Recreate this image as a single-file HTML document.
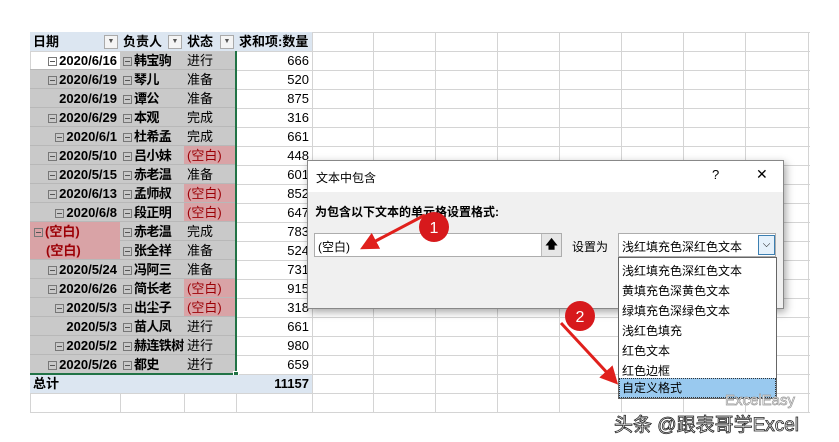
<!DOCTYPE html>
<html><head><meta charset="utf-8"><style>
*{margin:0;padding:0;box-sizing:border-box}
body{width:839px;height:442px;background:#fff;position:relative;overflow:hidden;font-family:"Liberation Sans","Microsoft YaHei","Noto Sans CJK SC",sans-serif;font-size:13px;color:#000}
.a{position:absolute}
.vl{position:absolute;width:1px;background:#d4d4d4}
.hl{position:absolute;height:1px;background:#d4d4d4}
.c{position:absolute;height:19px;line-height:19px;white-space:nowrap;overflow:hidden;border-right:1px solid #b8b8b8;border-bottom:1px solid #b8b8b8}
.g{background:#c9c9c9}
.p{background:#d9a3a6;color:#9c0006}
.b{font-weight:bold}
.m{display:inline-block;width:9px;height:9px;border:1px solid #777;margin-right:2px;vertical-align:-1px;position:relative}
.m:after{content:"";position:absolute;left:1px;top:3px;width:5px;height:1px;background:#555}
.dd{display:inline-block;width:14px;height:14px;border:1px solid #aaa;background:#f4f4f4;position:absolute;top:2px;font-size:7px;line-height:12px;text-align:center;color:#555}
.dlg{font-size:12px}
</style></head><body>
<div id="grid"></div>
<script>
var h='';
for(var y=32;y<=412;y+=19)h+='<div class="hl" style="left:30px;top:'+y+'px;width:780px"></div>';
[30,120,184,236,312,373,435,497,559,621,683,745,808].forEach(function(x){h+='<div class="vl" style="left:'+x+'px;top:32px;height:381px"></div>'});
document.getElementById('grid').innerHTML=h;
</script>
<div class="a" style="left:30px;top:32px;width:282px;height:19px;background:#dce6f1"></div>
<div class="a b" style="left:33px;top:32px;line-height:19px">日期</div>
<div class="dd" style="left:104px;top:35px">▼</div>
<div class="a b" style="left:123px;top:32px;line-height:19px">负责人</div>
<div class="dd" style="left:168px;top:35px">▼</div>
<div class="a b" style="left:187px;top:32px;line-height:19px">状态</div>
<div class="dd" style="left:220px;top:35px">▼</div>
<div class="a b" style="left:239px;top:32px;line-height:19px">求和项:数量</div>
<div id="rows"></div>
<script>
var d=[[1,'2020/6/16','韩宝驹','进行',666],[1,'2020/6/19','琴儿','准备',520],[0,'2020/6/19','谭公','准备',875],[1,'2020/6/29','本观','完成',316],[1,'2020/6/1','杜希孟','完成',661],[1,'2020/5/10','吕小妹','(空白)',448],[1,'2020/5/15','赤老温','准备',601],[1,'2020/6/13','孟师叔','(空白)',852],[1,'2020/6/8','段正明','(空白)',647],[2,'(空白)','赤老温','完成',783],[3,'(空白)','张全祥','准备',524],[1,'2020/5/24','冯阿三','准备',731],[1,'2020/6/26','简长老','(空白)',915],[1,'2020/5/3','出尘子','(空白)',318],[0,'2020/5/3','苗人凤','进行',661],[1,'2020/5/2','赫连铁树','进行',980],[1,'2020/5/26','都史','进行',659]];
var h='';
d.forEach(function(r,i){var y=51+i*19;
var pa=r[0]>=2;
var acls=pa?'p':(i==0?'':'g');
var at=(r[0]==1||r[0]==2?'<span class="m"></span>':'')+r[1];
if(pa){h+='<div class="c p b" style="left:30px;top:'+y+'px;width:91px;padding-left:'+(r[0]==2?4:16)+'px;'+(r[0]==2?'border-bottom:none':'')+'">'+at+'</div>';}
else h+='<div class="c '+acls+' b" style="left:30px;top:'+y+'px;width:91px;text-align:right;padding-right:3px">'+at+'</div>';
h+='<div class="c g b" style="left:120px;top:'+y+'px;width:65px;padding-left:3px;letter-spacing:-0.6px"><span class="m"></span>'+r[2]+'</div>';
var p=r[3]=='(空白)';
h+='<div class="c '+(p?'p':'g')+'" style="left:184px;top:'+y+'px;width:52px;padding-left:3px">'+r[3]+'</div>';
h+='<div class="a" style="left:236px;top:'+y+'px;width:73px;line-height:19px;text-align:right">'+r[4]+'</div>';
});
document.getElementById('rows').innerHTML=h;
</script>
<div class="a" style="left:235px;top:51px;width:2px;height:324px;background:#217346"></div>
<div class="a" style="left:30px;top:373px;width:207px;height:2px;background:#217346"></div>
<div class="a" style="left:233px;top:371px;width:6px;height:6px;background:#217346;border:1px solid #fff"></div>
<div class="a b" style="left:30px;top:375px;width:282px;height:18px;background:#dce6f1;line-height:18px;padding-left:3px">总计<span style="position:absolute;right:3px">11157</span></div>
<div class="a dlg" style="left:307px;top:160px;width:477px;height:149px;background:#f0f0f0;border:1px solid #888;box-shadow:2px 3px 8px rgba(0,0,0,.35)">
 <div class="a" style="left:0;top:0;width:475px;height:31px;background:#fff"></div>
 <div class="a" style="left:8px;top:8px">文本中包含</div>
 <div class="a" style="left:404px;top:6px;font-size:13px">?</div>
 <div class="a" style="left:448px;top:5px;font-size:14px">✕</div>
 <div class="a b" style="left:7px;top:42px">为包含以下文本的单元格设置格式:</div>
 <div class="a" style="left:6px;top:72px;width:248px;height:24px;background:#fff;border:1px solid #adadad;padding:4px 3px">(空白)</div>
 <div class="a" style="left:233px;top:73px;width:20px;height:22px;background:#e6e6e6;border-left:1px solid #bbb;text-align:center;font-weight:bold;line-height:20px">🡅</div>
 <div class="a" style="left:264px;top:77px">设置为</div>
 <div class="a" style="left:310px;top:72px;width:158px;height:24px;background:#fff;border:1px solid #adadad;padding:4px 3px">浅红填充色深红色文本</div>
 <div class="a" style="left:450px;top:74px;width:17px;height:20px;border:1px solid #3c7fb1;background:#e5f1fb;text-align:center;font-size:10px;line-height:18px">⌵</div>
</div>
<div class="a dlg" style="left:618px;top:257px;width:159px;height:142px;background:#fff;border:1px solid #666">
 <div style="padding:3px 0 0 3px;line-height:20px">浅红填充色深红色文本<br>黄填充色深黄色文本<br>绿填充色深绿色文本<br>浅红色填充<br>红色文本<br>红色边框</div>
 <div class="a" style="left:0;top:120px;width:157px;height:20px;background:#99c9ef;border:1px dotted #333;line-height:18px;padding-left:2px">自定义格式</div>
</div>
<svg class="a" style="left:0;top:0" width="839" height="442">
 <defs><marker id="ah" markerWidth="6" markerHeight="6" refX="3" refY="3" orient="auto"><path d="M0,0L6,3L0,6Z" fill="#e0201c"/></marker></defs>
 <line x1="425" y1="215" x2="368" y2="245" stroke="#e0201c" stroke-width="3" marker-end="url(#ah)"/>
 <line x1="561" y1="323" x2="612" y2="378" stroke="#e0201c" stroke-width="3" marker-end="url(#ah)"/>
 <circle cx="434" cy="227" r="15" fill="#d7191c"/><text x="434" y="233" font-size="16" fill="#fff" text-anchor="middle" font-family="Liberation Sans">1</text>
 <circle cx="580" cy="316" r="15" fill="#d7191c"/><text x="580" y="322" font-size="16" fill="#fff" text-anchor="middle" font-family="Liberation Sans">2</text>
 <text x="725" y="405" font-size="15" fill="#fff" stroke="#999" stroke-width="0.7" font-family="Liberation Sans">ExcelEasy</text>
 <text x="614" y="431" font-size="19" fill="#fff" stroke="#222" stroke-width="0.8" font-family="Liberation Sans, Noto Sans CJK SC, sans-serif">头条 @跟表哥学Excel</text>
</svg>
</body></html>
